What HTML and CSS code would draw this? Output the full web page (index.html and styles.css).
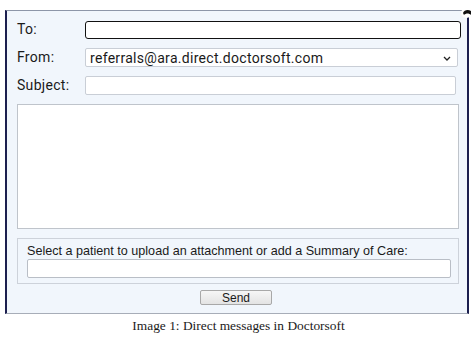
FILE: index.html
```html
<!DOCTYPE html>
<html lang="en">
<head>
    <meta charset="UTF-8">
    <meta name="viewport" content="width=device-width, initial-scale=1.0">
    <title>Direct messages</title>
    <link rel="stylesheet" href="styles.css">
</head>
<body>
    <div class="page">
        <div class="dialog">
            <span class="close">
                <svg width="10" height="9" viewBox="0 0 10 9">
                    <path d="M1 4 C2 1 6 0 9 2 L9 6 C7 4 4 4 2 6 Z" fill="#111"/>
                </svg>
            </span>
            <div class="row">
                <label class="label">To:</label>
                <input class="field field-to" type="text">
            </div>
            <div class="row">
                <label class="label">From:</label>
                <div class="field select">
                    <span>referrals@ara.direct.doctorsoft.com</span>
                    <svg class="chev" width="8" height="5" viewBox="0 0 8 5">
                        <path d="M1 1 L4 4 L7 1" fill="none" stroke="#222" stroke-width="1.3"/>
                    </svg>
                </div>
            </div>
            <div class="row">
                <label class="label">Subject:</label>
                <input class="field field-subject" type="text">
            </div>
            <div class="body-box"></div>
            <div class="attach">
                <div class="attach-text">Select a patient to upload an attachment or add a Summary of Care:</div>
                <div class="attach-input"></div>
            </div>
            <div class="actions">
                <button class="send">Send</button>
            </div>
        </div>
        <p class="caption">Image 1: Direct messages in Doctorsoft</p>
    </div>
</body>
</html>
```

FILE: styles.css
```css
* {
    margin: 0;
    padding: 0;
    box-sizing: border-box;
}
body {
    background: #fff;
    font-family: Roboto, "Liberation Sans", sans-serif;
}
.page {
    width: 474px;
    height: 337px;
    padding: 10px 0 0 5px;
}
.dialog {
    position: relative;
    width: 464px;
    height: 304px;
    background: #f1f6fc;
    border-left: 2px solid #1c1f4f;
    border-right: 2px solid #1c1f4f;
    border-top: 1px solid #8d96a8;
    border-bottom: 1px solid #a7adb8;
    padding: 9px 6px 0 10px;
}
.close {
    position: absolute;
    top: -3px;
    right: -5px;
    width: 11px;
    height: 10px;
    background: #fff;
    border-radius: 50%;
    display: flex;
    align-items: center;
    justify-content: center;
}
.row {
    display: flex;
    align-items: center;
    height: 19px;
    margin-bottom: 9px;
}
.label {
    width: 68px;
    font-size: 14px;
    letter-spacing: 0.3px;
    color: #1a1a1a;
    margin-top: -2px;
}
.field {
    height: 19px;
    background: #fff;
    border: 1px solid #c9ced6;
    border-radius: 2px;
    font-family: Roboto, "Liberation Sans", sans-serif;
    font-size: 14px;
}
.field-to {
    width: 376px;
    border: 1.5px solid #111;
    border-radius: 3px;
    height: 18px;
}
.select {
    width: 373px;
    display: flex;
    align-items: center;
    justify-content: space-between;
    padding: 0 6px 0 4px;
    color: #1a1a1a;
    letter-spacing: 0.3px;
}
.chev {
    margin-top: 1px;
}
.field-subject {
    width: 371px;
}
.body-box {
    width: 442px;
    height: 125px;
    background: #fff;
    border: 1px solid #bfc4cb;
}
.attach {
    width: 442px;
    height: 46px;
    margin-top: 9px;
    border: 1px solid #cdd2da;
    padding: 5px 0 0 9px;
}
.attach-text {
    font-family: "Liberation Sans", Arial, sans-serif;
    font-size: 12.6px;
    color: #1a1a1a;
    line-height: 14px;
}
.attach-input {
    width: 424px;
    height: 19px;
    margin-top: 1px;
    background: #fff;
    border: 1px solid #b9bec6;
    border-radius: 2px;
}
.actions {
    display: flex;
    justify-content: center;
    padding-top: 6px;
    padding-right: 6px;
}
.send {
    width: 72px;
    height: 15px;
    font-family: "Liberation Sans", Arial, sans-serif;
    font-size: 12px;
    line-height: 12px;
    color: #1a1a1a;
    background: linear-gradient(#f6f6f6, #e3e3e3);
    border: 1px solid #a8a8a8;
    border-radius: 2px;
}
.caption {
    font-family: "Liberation Serif", "Times New Roman", serif;
    font-size: 13.4px;
    color: #1a1a1a;
    text-align: center;
    margin-top: 4px;
    padding-right: 2px;
}
```
